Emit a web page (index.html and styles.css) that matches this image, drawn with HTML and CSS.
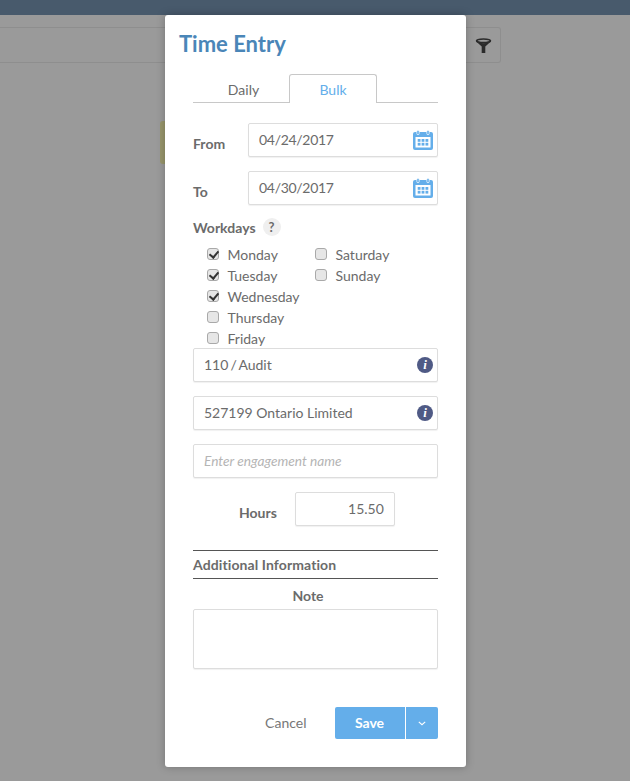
FILE: index.html
```html
<!DOCTYPE html>
<html lang="en">
<head>
<meta charset="utf-8">
<title>Time Entry</title>
<link rel="stylesheet" href="styles.css">
</head>
<body>
<div class="topbar"></div>
<div class="toolbar">
  <div class="filter-box">
    <svg class="filter-icon" viewBox="0 0 16 14" width="17" height="15"><ellipse cx="8" cy="2.600" rx="6.500" ry="1.700" fill="none" stroke="#2b2b2b" stroke-width="1.600"/><path d="M.8 3 L6.300 8 V14 H9.700 V8 L15.200 3 C12 5.400 4 5.400 .8 3Z" fill="#2b2b2b"/></svg>
  </div>
</div>
<div class="notice"></div>

<main class="modal">
  <h1 class="title">Time Entry</h1>
  <div class="tabs">
    <div class="tab tab-daily">Daily</div>
    <div class="tab tab-active">Bulk</div>
    <div class="tab-rest"></div>
  </div>

  <div class="date-row">
    <span class="label date-label">From</span>
    <div class="field date-field">04/24/2017
      <svg class="cal" viewBox="0 0 20 20" width="20" height="20"><path d="M2 2h16a2 2 0 0 1 2 2v14a2 2 0 0 1-2 2H2a2 2 0 0 1-2-2V4a2 2 0 0 1 2-2Z" fill="#64aeea"/><rect x="2.500" y="7" width="15" height="10.500" fill="#fff"/><rect x="3.800" y="0.300" width="2.400" height="4.400" rx="1.200" fill="#64aeea" stroke="#fff" stroke-width=".7"/><rect x="13.800" y="0.300" width="2.400" height="4.400" rx="1.200" fill="#64aeea" stroke="#fff" stroke-width=".7"/><g fill="#64aeea"><rect x="4.700" y="9" width="2.800" height="2.800"/><rect x="8.600" y="9" width="2.800" height="2.800"/><rect x="12.500" y="9" width="2.800" height="2.800"/><rect x="4.700" y="12.800" width="2.800" height="2.800"/><rect x="8.600" y="12.800" width="2.800" height="2.800"/><rect x="12.500" y="12.800" width="2.800" height="2.800"/></g></svg>
    </div>
  </div>
  <div class="date-row date-row-second">
    <span class="label date-label">To</span>
    <div class="field date-field">04/30/2017
      <svg class="cal" viewBox="0 0 20 20" width="20" height="20"><path d="M2 2h16a2 2 0 0 1 2 2v14a2 2 0 0 1-2 2H2a2 2 0 0 1-2-2V4a2 2 0 0 1 2-2Z" fill="#64aeea"/><rect x="2.500" y="7" width="15" height="10.500" fill="#fff"/><rect x="3.800" y="0.300" width="2.400" height="4.400" rx="1.200" fill="#64aeea" stroke="#fff" stroke-width=".7"/><rect x="13.800" y="0.300" width="2.400" height="4.400" rx="1.200" fill="#64aeea" stroke="#fff" stroke-width=".7"/><g fill="#64aeea"><rect x="4.700" y="9" width="2.800" height="2.800"/><rect x="8.600" y="9" width="2.800" height="2.800"/><rect x="12.500" y="9" width="2.800" height="2.800"/><rect x="4.700" y="12.800" width="2.800" height="2.800"/><rect x="8.600" y="12.800" width="2.800" height="2.800"/><rect x="12.500" y="12.800" width="2.800" height="2.800"/></g></svg>
    </div>
  </div>

  <div class="workdays-head">
    <span class="label">Workdays</span>
    <span class="help">?</span>
  </div>
  <div class="days">
    <div class="day-col day-col-first">
      <label class="day"><span class="box checked"></span>Monday</label>
      <label class="day"><span class="box checked"></span>Tuesday</label>
      <label class="day"><span class="box checked"></span>Wednesday</label>
      <label class="day"><span class="box"></span>Thursday</label>
      <label class="day"><span class="box"></span>Friday</label>
    </div>
    <div class="day-col">
      <label class="day"><span class="box"></span>Saturday</label>
      <label class="day"><span class="box"></span>Sunday</label>
    </div>
  </div>

  <div class="field wide-field"><span class="tight">110 / Audit</span><span class="info">i</span></div>
  <div class="field wide-field spaced">527199 Ontario Limited<span class="info">i</span></div>
  <div class="field wide-field spaced placeholder">Enter engagement name</div>

  <div class="hours-row">
    <span class="label">Hours</span>
    <div class="field hours-field">15.50</div>
  </div>

  <h2 class="section">Additional Information</h2>
  <div class="label note-label">Note</div>
  <div class="field note-field"></div>

  <div class="actions">
    <span class="cancel">Cancel</span>
    <button class="save" type="button">Save</button>
    <button class="caret" type="button" aria-label="More"><svg viewBox="0 0 10 6" width="8" height="5"><path d="M1 1l4 3.500L9 1" fill="none" stroke="#fff" stroke-width="1.400"/></svg></button>
  </div>
</main>
</body>
</html>
```
FILE: styles.css
```css
* { box-sizing: border-box; }
html, body { margin: 0; padding: 0; }
body {
  width: 630px;
  height: 781px;
  overflow: hidden;
  background: #9a9a9a;
  font-family: Lato, "Open Sans", sans-serif;
  font-size: 15px;
  color: #6b6b6b;
}
.topbar { height: 15px; background: #485a6c; }
.toolbar { margin-top: 12px; width: 501px; height: 36px; border: 1px solid #8e8e8e; border-left: 0; border-radius: 0 3px 3px 0; display: flex; justify-content: flex-end; }
.filter-box { width: 34px; display: flex; align-items: center; justify-content: center; }
.filter-icon { display: block; }
.notice { margin-top: 58px; width: 200px; height: 43px; background: #98966c; border-radius: 3px; margin-left: 160px; }

.modal {
  position: absolute;
  left: 165px;
  top: 15px;
  width: 301px;
  height: 752px;
  background: #fff;
  border-radius: 3px;
  padding: 0 28px;
  box-shadow: 0 0 8px rgba(0,0,0,.25);
}
.title { margin: 15px 0 0 -14px; font-size: 22px; line-height: 28px; font-weight: 700; color: #4a86b8; }
.tabs { display: flex; height: 29px; margin-top: 16px; }
.tab { width: 96px; border-bottom: 1px solid #c8c8c8; text-align: center; font-size: 14px; line-height: 31px; color: #6b6b6b; }
.tab-daily { padding-left: 5px; }
.tab-active { width: 88px; border: 1px solid #c8c8c8; border-bottom: 0; border-radius: 3px 3px 0 0; color: #64aeea; line-height: 29px; }
.tab-rest { flex: 1; border-bottom: 1px solid #c8c8c8; }

.label { font-weight: 700; font-size: 14px; color: #6b6b6b; }
.field {
  position: relative;
  height: 34px;
  background: #fff;
  border: 1px solid #ddd;
  border-radius: 2px;
  box-shadow: 0 1px 1px rgba(0,0,0,.06);
  font-size: 14px;
  line-height: 32px;
  padding: 0 10px;
  color: #6b6b6b;
}
.date-row { display: flex; justify-content: space-between; height: 34px; margin-top: 20px; }
.date-row-second { margin-top: 14px; }
.date-label { line-height: 42px; }
.date-field { width: 190px; letter-spacing: -.3px; }
.cal { position: absolute; right: 4px; top: 6px; }

.workdays-head { display: flex; align-items: center; gap: 7px; height: 18px; margin-top: 13px; }
.help { width: 18px; height: 18px; border-radius: 50%; background: #efefef; font-size: 13px; font-weight: 700; text-align: center; line-height: 18px; color: #6b6b6b; }

.days { display: flex; margin: 8px 0 0 14px; height: 104px; }
.day-col { display: flex; flex-direction: column; }
.day-col-first { width: 108px; }
.day { display: flex; align-items: center; flex: none; height: 21px; font-size: 14px; color: #6b6b6b; }
.box { position: relative; width: 12px; height: 12px; margin-right: 8.500px; margin-bottom: 2px; background: #e6e6e6; border: 1px solid #a9a9a9; border-radius: 3px; }
.checked::after { content: ""; position: absolute; left: 3px; top: 0; width: 4px; height: 7px; border: solid #333; border-width: 0 2px 2px 0; transform: rotate(40deg); }

.wide-field { width: 245px; }
.tight { word-spacing: -1.500px; }
.spaced { margin-top: 14px; }
.placeholder { font-style: italic; color: #b5b5b5; font-size: 13.700px; }
.info { position: absolute; right: 4px; top: 8px; width: 16px; height: 16px; border-radius: 50%; background: #4f5a85; color: #fff; font-family: "Liberation Serif", serif; font-style: italic; font-weight: 700; font-size: 13px; line-height: 16px; text-align: center; }

.hours-row { display: flex; align-items: center; margin-top: 14px; padding-left: 46px; gap: 18px; }
.hours-row .label { position: relative; top: 3px; }
.hours-field { width: 100px; text-align: right; }

.section { margin: 24px 0 0; height: 29px; border-top: 1px solid #555; border-bottom: 1px solid #555; font-size: 14px; line-height: 27px; font-weight: 700; letter-spacing: .1px; color: #6b6b6b; }
.note-label { margin-top: 8px; line-height: 18px; text-align: center; padding-right: 15px; }
.note-field { height: 60px; margin-top: 4px; }

.actions { display: flex; justify-content: flex-end; align-items: center; margin-top: 38px; }
.cancel { font-size: 14px; color: #777; margin-right: 28.500px; margin-bottom: 2px; }
.save, .caret { height: 32px; border: 0; padding: 0; background: #64aeea; color: #fff; font-family: inherit; font-size: 14px; font-weight: 700; }
.save { width: 70px; padding: 0 1px 2px 0; border-radius: 2px 0 0 2px; }
.caret { width: 32px; margin-left: 1px; border-radius: 0 2px 2px 0; display: flex; align-items: center; justify-content: center; }
```
